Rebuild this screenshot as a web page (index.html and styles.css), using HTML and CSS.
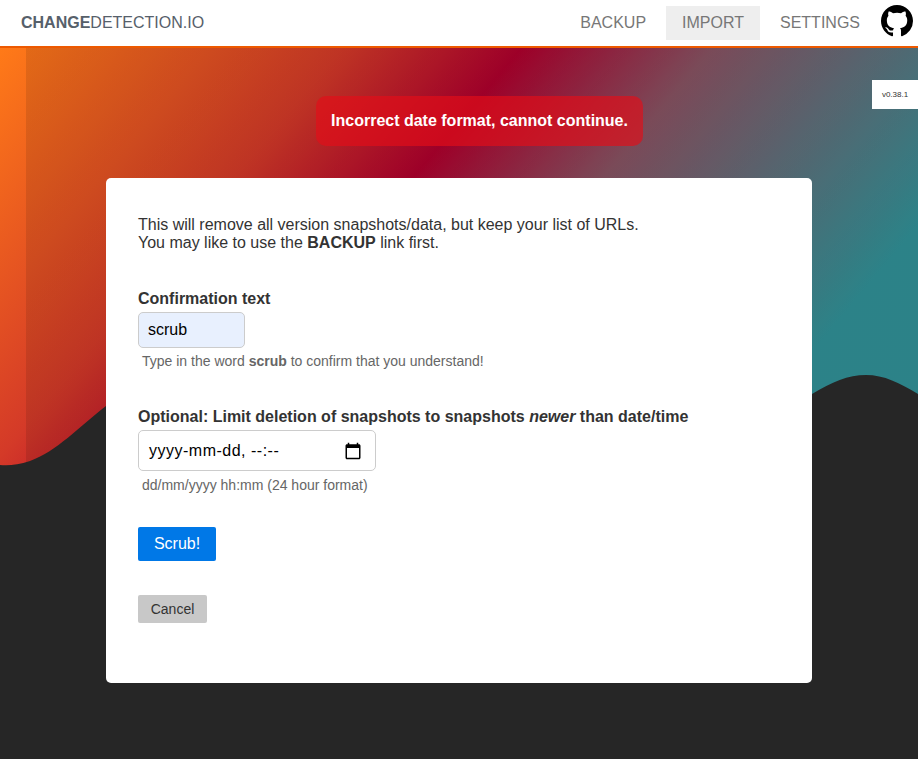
FILE: index.html
```html
<!DOCTYPE html>
<html lang="en">
<head>
<meta charset="utf-8">
<title>ChangeDetection.io</title>
<link rel="stylesheet" href="styles.css">
</head>
<body>
<header class="topbar">
  <a class="logo" href="#"><strong>CHANGE</strong>DETECTION.IO</a>
  <nav class="nav">
    <a class="nav-link" href="#">BACKUP</a>
    <a class="nav-link nav-active" href="#">IMPORT</a>
    <a class="nav-link" href="#">SETTINGS</a>
    <a class="gh" href="#" aria-label="GitHub">
      <svg viewBox="0 0 16 16" width="32" height="32"><path fill-rule="evenodd" d="M8 0C3.58 0 0 3.58 0 8c0 3.54 2.29 6.53 5.47 7.59.4.07.55-.17.55-.38 0-.19-.01-.82-.01-1.49-2.01.37-2.53-.49-2.69-.94-.09-.23-.48-.94-.82-1.13-.28-.15-.68-.52-.01-.53.63-.01 1.08.58 1.23.82.72 1.21 1.87.87 2.33.66.07-.52.28-.87.51-1.07-1.78-.2-3.64-.89-3.64-3.95 0-.87.31-1.59.82-2.15-.08-.2-.36-1.02.08-2.12 0 0 .67-.21 2.2.82.64-.18 1.32-.27 2-.27.68 0 1.36.09 2 .27 1.53-1.04 2.2-.82 2.2-.82.44 1.1.16 1.92.08 2.12.51.56.82 1.27.82 2.15 0 3.07-1.87 3.75-3.65 3.95.29.25.54.73.54 1.48 0 1.07-.01 1.93-.01 2.2 0 .21.15.46.55.38A8.013 8.013 0 0016 8c0-4.42-3.58-8-8-8z"/></svg>
    </a>
  </nav>
</header>
<main class="stage">
  <div class="version">v0.38.1</div>
  <svg class="wave" viewBox="0 0 918 420" preserveAspectRatio="none"><path d="M0 417 C8 418 18 417 30 413 C56 404 80 378 106 358 C300 200 600 420 812 346 C832 334 848 327 866 327 C884 327 900 335 918 346 L918 420 L0 420 Z"/></svg>
  <div class="alert">Incorrect date format, cannot continue.</div>
  <section class="card">
    <p class="intro">This will remove all version snapshots/data, but keep your list of URLs.<br>You may like to use the <strong>BACKUP</strong> link first.</p>
    <div class="field field-confirm">
      <label class="label">Confirmation text</label>
      <input class="text-input" type="text" value="scrub">
      <div class="help help-tight">Type in the word <strong>scrub</strong> to confirm that you understand!</div>
    </div>
    <div class="field field-date">
      <label class="label">Optional: Limit deletion of snapshots to snapshots <em>newer</em> than date/time</label>
      <div class="date-input">
        <span class="date-text">yyyy-mm-dd, --:--</span>
        <svg viewBox="0 0 24 24" width="18" height="18"><path d="M20 3h-1V1h-2v2H7V1H5v2H4c-1.1 0-2 .9-2 2v16c0 1.1.9 2 2 2h16c1.1 0 2-.9 2-2V5c0-1.1-.9-2-2-2zm0 18H4V8h16v13z"/></svg>
      </div>
      <div class="help">dd/mm/yyyy hh:mm (24 hour format)</div>
    </div>
    <div class="actions">
      <button class="btn btn-primary" type="button">Scrub!</button>
      <a class="btn btn-cancel" href="#">Cancel</a>
    </div>
  </section>
</main>
</body>
</html>
```
FILE: styles.css
```css
* { box-sizing: border-box; }
html, body { margin: 0; height: 100%; }
body {
  background: #262626;
  color: #333;
  font-family: "Liberation Sans", Arial, sans-serif;
  font-size: 16px;
  overflow: hidden;
}
a { text-decoration: none; }
.topbar {
  height: 48px;
  background: #fff;
  border-bottom: 2px solid #ed5900;
  display: flex;
  align-items: center;
  justify-content: space-between;
  padding-left: 21px;
  padding-right: 5px;
}
.logo { color: #56606a; font-size: 16px; }
.nav { display: flex; align-items: center; gap: 4px; }
.nav-link {
  color: #777;
  font-size: 16px;
  line-height: 34px;
  height: 34px;
  padding: 0 16px;
}
.nav-active { background: #eee; }
.gh { display: flex; margin-left: 1px; margin-bottom: 4px; color: #000; }
.stage {
  position: relative;
  height: 711px;
  padding-top: 48px;
  background:
    linear-gradient(90deg, transparent 26px, rgba(0,0,0,.1) 26px) 0 0 / 100% 420px no-repeat,
    linear-gradient(130deg, #ff7a18, #d43a28 27%, #af002d 41.07%, #885262 56%, #319197 84%) 0 0 / 100% 420px no-repeat;
}
.wave { position: absolute; left: 0; top: 0; width: 100%; height: 420px; fill: #262626; }
.version {
  position: absolute;
  top: 32px;
  right: 0;
  width: 46px;
  height: 29px;
  background: #fff;
  color: #333;
  font-size: 8px;
  line-height: 29px;
  text-align: center;
  z-index: 2;
}
.alert {
  position: relative;
  width: 327px;
  height: 50px;
  margin-left: 316px;
  border-radius: 10px;
  background: rgba(228, 14, 24, .66);
  color: #fff;
  font-weight: 700;
  font-size: 16px;
  line-height: 50px;
  text-align: center;
}
.card {
  position: relative;
  width: 706px;
  height: 505px;
  margin: 32px 0 0 106px;
  padding: 38px 32px 0;
  background: #fff;
  border-radius: 5px;
}
.intro { margin: 0; line-height: 18px; }
.field-confirm { margin-top: 38px; }
.field-date { margin-top: 39px; }
.label { display: block; font-weight: 700; line-height: 18px; margin-bottom: 4px; }
.text-input {
  display: block;
  width: 107px;
  height: 36px;
  padding: 0 9px;
  border: 1px solid #ccc;
  border-radius: 5px;
  background: #e8f0fe;
  color: #000;
  font: 16px "Liberation Sans", Arial, sans-serif;
}
.date-input {
  display: flex;
  align-items: center;
  justify-content: space-between;
  width: 238px;
  height: 41px;
  padding: 0 13px 0 10px;
  border: 1px solid #ccc;
  border-radius: 5px;
  color: #000;
}
.date-text { letter-spacing: .5px; }
.help { margin: 6px 0 0 4px; font-size: 14px; line-height: 16px; color: #666; }
.help-tight { margin-top: 5px; }
.actions { display: flex; flex-direction: column; align-items: flex-start; margin-top: 34px; }
.btn {
  border: 0;
  border-radius: 2px;
  font-family: "Liberation Sans", Arial, sans-serif;
}
.btn-primary {
  width: 78px;
  height: 34px;
  background: #0078e7;
  color: #fff;
  font-size: 16px;
}
.btn-cancel {
  width: 69px;
  height: 28px;
  margin-top: 34px;
  background: #c8c8c8;
  color: #333;
  font-size: 14px;
  line-height: 28px;
  text-align: center;
}
```
